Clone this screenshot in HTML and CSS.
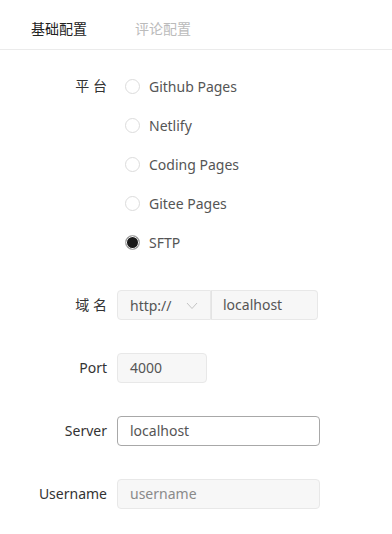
FILE: index.html
```html
<!DOCTYPE html>
<html>
<head>
<meta charset="utf-8">
<link rel="stylesheet" href="styles.css">
</head>
<body>
<div class="tabs">
  <div class="tab active">基础配置</div>
  <div class="tab">评论配置</div>
</div>
<form class="form">
  <div class="item">
    <div class="label">平 台</div>
    <div class="radios">
      <label class="radio"><span class="dot"></span>Github Pages</label>
      <label class="radio"><span class="dot"></span>Netlify</label>
      <label class="radio"><span class="dot"></span>Coding Pages</label>
      <label class="radio"><span class="dot"></span>Gitee Pages</label>
      <label class="radio"><span class="dot on"></span>SFTP</label>
    </div>
  </div>
  <div class="item">
    <div class="label">域 名</div>
    <div class="group">
      <div class="select">http://<svg class="chev" width="12" height="8" viewBox="0 0 12 8"><polyline points="1,1 6,6.5 11,1" fill="none" stroke="#c4c4c4" stroke-width="1"/></svg></div>
      <div class="field addon">localhost</div>
    </div>
  </div>
  <div class="item">
    <div class="label">Port</div>
    <div class="field port">4000</div>
  </div>
  <div class="item">
    <div class="label">Server</div>
    <div class="field wide active-field">localhost</div>
  </div>
  <div class="item">
    <div class="label">Username</div>
    <div class="field wide placeholder">username</div>
  </div>
</form>
</body>
</html>
```
FILE: styles.css
```css
html, body {
  margin: 0;
  padding: 0;
  background: #fff;
  font-family: "Noto Sans", "Noto Sans CJK SC", sans-serif;
  font-size: 14px;
  color: #333;
}
.tabs {
  display: flex;
  gap: 48px;
  height: 49px;
  padding-left: 31px;
  border-bottom: 1px solid #ebebeb;
  box-sizing: content-box;
  align-items: center;
}
.tab {
  color: #bbb;
  font-size: 14px;
  padding-top: 6px;
}
.tab.active {
  color: #222;
}
.form {
  display: flex;
  flex-direction: column;
  gap: 33px;
  padding-top: 21px;
}
.item {
  display: flex;
  align-items: flex-start;
}
.label {
  width: 107px;
  padding-right: 10px;
  text-align: right;
  line-height: 30px;
  height: 30px;
  color: #333;
  flex: none;
}
.radios {
  display: flex;
  flex-direction: column;
  gap: 9px;
  padding-left: 8px;
}
.radio {
  display: flex;
  align-items: center;
  height: 30px;
  color: #555;
  font-size: 14px;
}
.dot {
  width: 13px;
  height: 13px;
  border: 1px solid #dcdcdc;
  border-radius: 50%;
  margin-right: 9px;
  box-sizing: content-box;
}
.dot.on {
  background: #1a1a1a;
  box-shadow: inset 0 0 0 1px #fff;
  border-color: #bbb;
}
.group {
  display: flex;
}
.select {
  display: flex;
  align-items: center;
  justify-content: space-between;
  width: 94px;
  height: 30px;
  box-sizing: border-box;
  padding: 0 12px 0 12px;
  background: #f7f7f7;
  border: 1px solid #e8e8e8;
  border-radius: 4px 0 0 4px;
  color: #555;
}
.chev {
  display: block;
  margin-top: 1px;
}
.field {
  height: 30px;
  box-sizing: border-box;
  line-height: 28px;
  padding: 0 12px;
  background: #f7f7f7;
  border: 1px solid #e8e8e8;
  border-radius: 4px;
  color: #555;
}
.field.addon {
  width: 107px;
  border-left: none;
  border-radius: 0 4px 4px 0;
  box-shadow: inset 1px 0 0 #e3e3e3;
}
.field.port {
  width: 90px;
}
.field.wide {
  width: 203px;
}
.field.active-field {
  background: #fff;
  border-color: #a8a8a8;
}
.field.placeholder {
  color: #8a8a8a;
}
```
